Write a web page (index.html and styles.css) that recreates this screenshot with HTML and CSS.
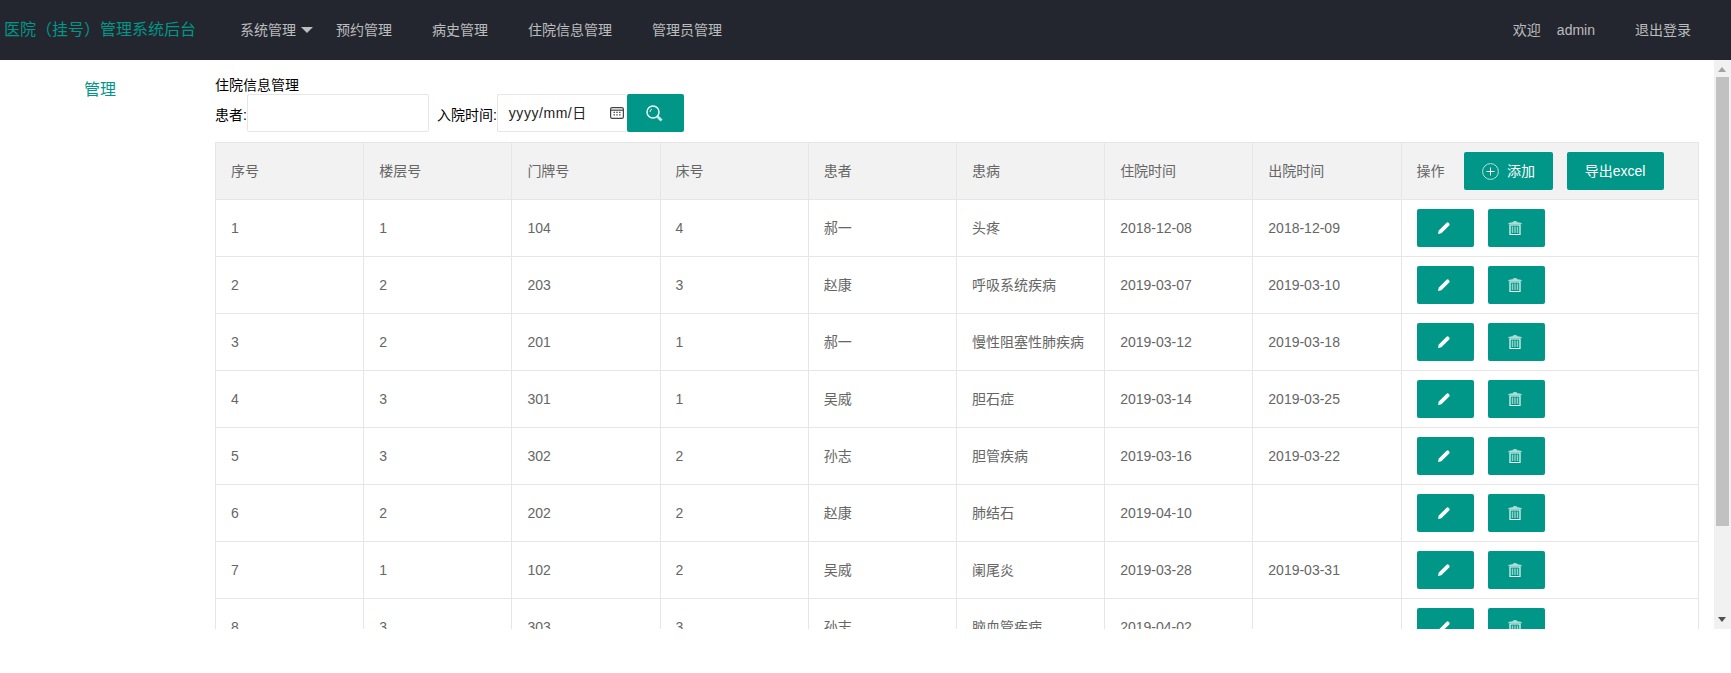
FILE: index.html
```html
<!DOCTYPE html>
<html lang="zh-CN">
<head>
<meta charset="utf-8">
<title>医院（挂号）管理系统后台</title>
<link rel="stylesheet" href="styles.css">
</head>
<body>
<svg class="sprite" width="0" height="0" aria-hidden="true">
  <symbol id="i-edit" viewBox="0 0 14 14">
    <path d="M1 13 L1.8 9.6 L9.6 1.8 Q10.6 .9 11.6 1.8 L12.2 2.4 Q13.1 3.4 12.2 4.4 L4.4 12.2 Z" fill="#fff"/>
  </symbol>
  <symbol id="i-trash" viewBox="0 0 14 14">
    <path d="M0 3.2 Q0 1.4 2.5 1.4 L4.6 1.2 Q5 0 7 0 Q9 0 9.4 1.2 L11.5 1.4 Q14 1.4 14 3.2 Z" fill="#a9ddd6"/>
    <path d="M2 4 H12 V13.5 H2 Z" fill="none" stroke="#f0faf9" stroke-width="1.2"/>
    <path d="M4.5 5.5 V12 M7 5.5 V12 M9.5 5.5 V12" stroke="#8fd4cb" stroke-width="1.4"/>
  </symbol>
</svg>
<header class="topbar">
  <div class="logo">医院（挂号）管理系统后台</div>
  <nav class="nav">
    <a class="nav-item has-caret">系统管理<span class="caret"></span></a>
    <a class="nav-item">预约管理</a>
    <a class="nav-item">病史管理</a>
    <a class="nav-item">住院信息管理</a>
    <a class="nav-item">管理员管理</a>
  </nav>
  <div class="userbar">
    <span>欢迎</span>
    <span class="user">admin</span>
    <a class="logout">退出登录</a>
  </div>
</header>
<div class="workspace">
  <aside class="sidebar">管理</aside>
  <main class="content">
    <div class="title">住院信息管理</div>
    <form class="search">
      <label class="lbl">患者:</label>
      <input class="field field-name" type="text">
      <label class="lbl lbl-date">入院时间:</label>
      <div class="field field-date">
        <span class="date-text">yyyy/mm/日</span>
        <svg class="cal" viewBox="0 0 14 12" width="14" height="12"><rect x=".6" y=".6" width="12.8" height="10.8" rx="1.6" fill="none" stroke="#444" stroke-width="1.2"/><path d="M1 3.2 H13" stroke="#444" stroke-width="1.2"/><path d="M3.5 5.4 h1.4 M6.3 5.4 h1.4 M9.1 5.4 h1.4 M3.5 7.9 h1.4 M6.3 7.9 h1.4 M9.1 7.9 h1.4" stroke="#444" stroke-width="1.3"/></svg>
      </div>
      <button class="btn btn-search" type="button">
        <svg viewBox="0 0 17 17" width="17" height="17"><circle cx="7" cy="7" r="6" fill="none" stroke="#f0faf9" stroke-width="1.5"/><path d="M4 7 A3 3 0 0 1 6 4" fill="none" stroke="#e8f7f5" stroke-width="1"/><path d="M11.4 11.4 L15.6 15.6" stroke="#c4e8e3" stroke-width="2.8"/></svg>
      </button>
    </form>
    <table class="grid">
      <colgroup><col class="c"><col class="c"><col class="c"><col class="c"><col class="c"><col class="c"><col class="c"><col class="c"><col></colgroup>
      <thead>
        <tr>
          <th>序号</th><th>楼层号</th><th>门牌号</th><th>床号</th><th>患者</th><th>患病</th><th>住院时间</th><th>出院时间</th>
          <th>
            <div class="ops ops-head">
              <span class="ops-label">操作</span>
              <button class="btn btn-add" type="button"><svg class="plus" viewBox="0 0 17 17" width="17" height="17"><circle cx="8.5" cy="8.5" r="7.9" fill="none" stroke="#b9e3dd" stroke-width="1"/><path d="M8.5 4.5 V12.5 M4.5 8.5 H12.5" stroke="#fff" stroke-width="1"/></svg>添加</button>
              <button class="btn btn-export" type="button">导出excel</button>
            </div>
          </th>
        </tr>
      </thead>
      <tbody>
        <tr><td>1</td><td>1</td><td>104</td><td>4</td><td>郝一</td><td>头疼</td><td>2018-12-08</td><td>2018-12-09</td><td><div class="ops"><button class="btn btn-icon" type="button"><svg width="14" height="14"><use href="#i-edit"/></svg></button><button class="btn btn-icon" type="button"><svg width="14" height="14"><use href="#i-trash"/></svg></button></div></td></tr>
        <tr><td>2</td><td>2</td><td>203</td><td>3</td><td>赵康</td><td>呼吸系统疾病</td><td>2019-03-07</td><td>2019-03-10</td><td><div class="ops"><button class="btn btn-icon" type="button"><svg width="14" height="14"><use href="#i-edit"/></svg></button><button class="btn btn-icon" type="button"><svg width="14" height="14"><use href="#i-trash"/></svg></button></div></td></tr>
        <tr><td>3</td><td>2</td><td>201</td><td>1</td><td>郝一</td><td>慢性阻塞性肺疾病</td><td>2019-03-12</td><td>2019-03-18</td><td><div class="ops"><button class="btn btn-icon" type="button"><svg width="14" height="14"><use href="#i-edit"/></svg></button><button class="btn btn-icon" type="button"><svg width="14" height="14"><use href="#i-trash"/></svg></button></div></td></tr>
        <tr><td>4</td><td>3</td><td>301</td><td>1</td><td>吴威</td><td>胆石症</td><td>2019-03-14</td><td>2019-03-25</td><td><div class="ops"><button class="btn btn-icon" type="button"><svg width="14" height="14"><use href="#i-edit"/></svg></button><button class="btn btn-icon" type="button"><svg width="14" height="14"><use href="#i-trash"/></svg></button></div></td></tr>
        <tr><td>5</td><td>3</td><td>302</td><td>2</td><td>孙志</td><td>胆管疾病</td><td>2019-03-16</td><td>2019-03-22</td><td><div class="ops"><button class="btn btn-icon" type="button"><svg width="14" height="14"><use href="#i-edit"/></svg></button><button class="btn btn-icon" type="button"><svg width="14" height="14"><use href="#i-trash"/></svg></button></div></td></tr>
        <tr><td>6</td><td>2</td><td>202</td><td>2</td><td>赵康</td><td>肺结石</td><td>2019-04-10</td><td></td><td><div class="ops"><button class="btn btn-icon" type="button"><svg width="14" height="14"><use href="#i-edit"/></svg></button><button class="btn btn-icon" type="button"><svg width="14" height="14"><use href="#i-trash"/></svg></button></div></td></tr>
        <tr><td>7</td><td>1</td><td>102</td><td>2</td><td>吴威</td><td>阑尾炎</td><td>2019-03-28</td><td>2019-03-31</td><td><div class="ops"><button class="btn btn-icon" type="button"><svg width="14" height="14"><use href="#i-edit"/></svg></button><button class="btn btn-icon" type="button"><svg width="14" height="14"><use href="#i-trash"/></svg></button></div></td></tr>
        <tr><td>8</td><td>3</td><td>303</td><td>3</td><td>孙志</td><td>脑血管疾病</td><td>2019-04-02</td><td></td><td><div class="ops"><button class="btn btn-icon" type="button"><svg width="14" height="14"><use href="#i-edit"/></svg></button><button class="btn btn-icon" type="button"><svg width="14" height="14"><use href="#i-trash"/></svg></button></div></td></tr>
      </tbody>
    </table>
  </main>
  <div class="scrollbar" aria-hidden="true">
    <span class="arrow arrow-up"></span>
    <span class="thumb"></span>
    <span class="arrow arrow-down"></span>
  </div>
</div>
</body>
</html>
```
FILE: styles.css
```css
* { box-sizing: border-box; }
html, body { height: 100%; }
body {
  margin: 0;
  overflow: hidden;
  background: #fff;
  color: #000;
  font: 14px/20px "Liberation Sans", "Noto Sans CJK SC", sans-serif;
}
.sprite { position: absolute; }

.topbar {
  display: flex;
  align-items: center;
  height: 60px;
  padding: 0 40px 0 4px;
  background: #23262e;
  color: rgba(255, 255, 255, .7);
}
.logo { width: 216px; font-size: 16px; color: #009688; }
.nav { display: flex; flex: 1; }
.nav-item { position: relative; padding: 0 20px; line-height: 60px; }
.caret {
  position: absolute;
  right: 3px;
  top: 27px;
  border-style: solid;
  border-width: 6px 6px 0;
  border-color: rgba(255, 255, 255, .7) transparent transparent;
}
.userbar { display: flex; align-items: center; }
.user { margin-left: 16px; }
.logout { margin-left: 40px; }

.workspace { display: flex; height: 569px; }
.sidebar {
  flex: none;
  width: 200px;
  padding-top: 19px;
  font-size: 16px;
  line-height: 22px;
  text-align: center;
  color: #009688;
}
.content { flex: 1; min-width: 0; padding: 16px 15px 0 15px; overflow: hidden; }
.title { height: 18px; line-height: 18px; }
.search { display: flex; align-items: center; height: 38px; margin-bottom: 10px; }
.lbl { padding-top: 4px; }
.lbl-date { margin-left: 8px; }
.field {
  height: 38px;
  border: 1px solid #e6e6e6;
  border-radius: 2px;
  background: #fff;
}
.field-name { width: 182px; padding: 0 10px; outline: 0; }
.field-date {
  display: flex;
  align-items: center;
  justify-content: space-between;
  width: 130px;
  padding: 0 3px 0 11px;
  border-right: 0;
  color: #222;
}
.date-text { letter-spacing: .55px; }
.cal { display: block; }

.btn {
  display: inline-flex;
  align-items: center;
  justify-content: center;
  height: 38px;
  padding: 0;
  border: 0;
  border-radius: 2px;
  background: #009688;
  color: #fff;
  font: inherit;
}
.btn-search { width: 57px; padding-right: 2px; }
.btn-icon { width: 57px; padding-right: 2px; }
.btn-add { width: 89px; padding-left: 1px; }
.plus { margin-right: 8px; }
.btn-export { width: 97px; }

.grid {
  width: 1484px;
  table-layout: fixed;
  border-collapse: collapse;
  color: #666;
}
.c { width: 148.2px; }
.grid th, .grid td {
  height: 57px;
  padding: 9px 15px;
  border: 1px solid #e6e6e6;
  font-weight: 400;
  text-align: left;
}
.grid th { background: #f2f2f2; }
.ops { display: flex; align-items: center; gap: 14px; }
.ops-label { margin-right: 5px; }

.scrollbar {
  flex: none;
  position: relative;
  width: 17px;
  background: #f1f1f1;
}
.thumb {
  position: absolute;
  left: 2px;
  top: 17px;
  width: 13px;
  height: 449px;
  background: #c1c1c1;
}
.arrow { position: absolute; left: 4px; border-style: solid; border-color: transparent; }
.arrow-up { top: 7px; border-width: 0 4.5px 5px; border-bottom-color: #a3a3a3; }
.arrow-down { bottom: 7px; border-width: 5px 4.5px 0; border-top-color: #505050; }
```
